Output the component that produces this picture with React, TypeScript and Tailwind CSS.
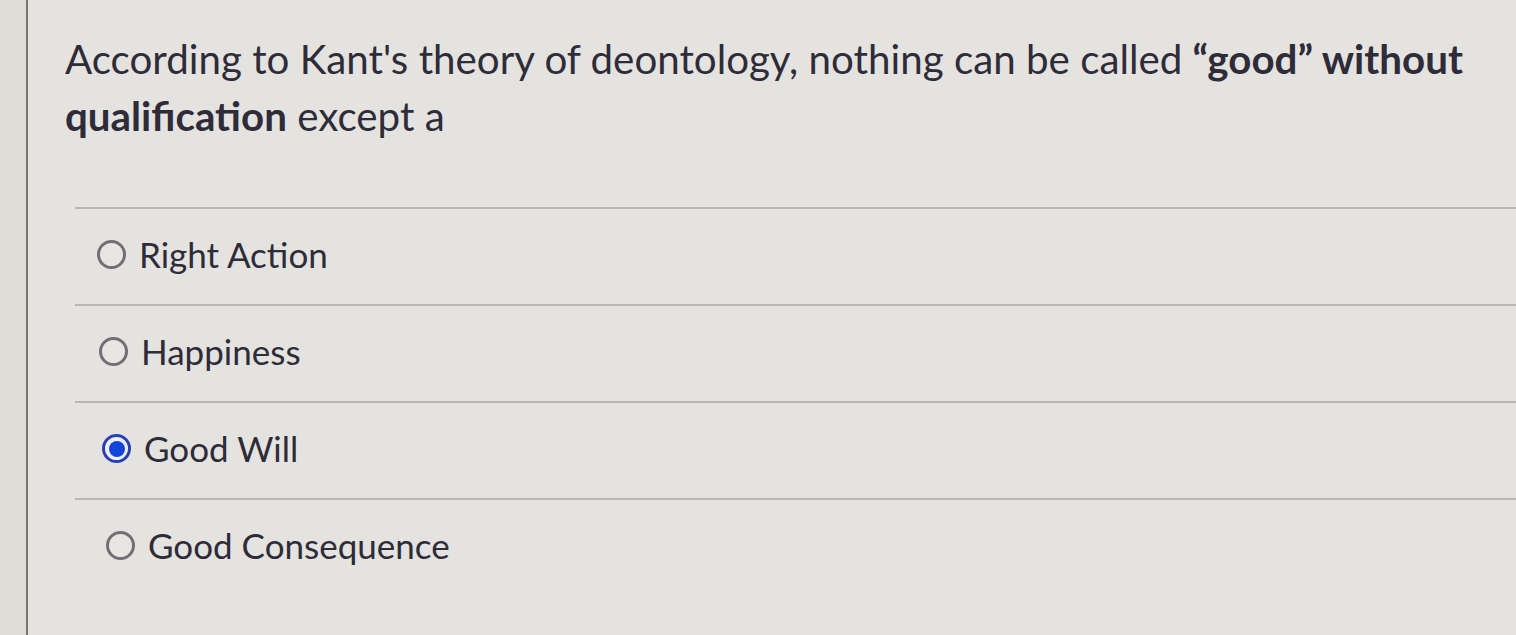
const options = [
  { label: 'Right Action', pad: 'pl-[22px]', checked: false },
  { label: 'Happiness', pad: 'pl-[24px]', checked: false },
  { label: 'Good Will', pad: 'pl-[27px]', checked: true },
  { label: 'Good Consequence', pad: 'pl-[31px]', checked: false },
]

function Radio({ checked }: { checked: boolean }) {
  if (checked) {
    return (
      <span className="flex h-[29px] w-[29px] shrink-0 items-center justify-center rounded-full border-[3px] border-[#2a3fb0] bg-[#eef0f8]">
        <span className="h-[16px] w-[16px] rounded-full bg-[#1346d8]" />
      </span>
    )
  }
  return <span className="h-[29px] w-[29px] shrink-0 rounded-full border-[3px] border-[#716f74] bg-[#e7e6e2]" />
}

export default function App() {
  return (
    <div className="flex h-[635px] w-[1516px] overflow-hidden bg-[#e4e3df] font-['Lato','Open_Sans',sans-serif] text-[#2e2c38]">
      <div className="w-[28px] shrink-0 border-r-[2px] border-[#77757a] bg-[#dedcd7]" />
      <main className="flex-1 pl-[37px]">
        <h1 className="pt-[30px] text-[40.3px] leading-[57px] font-normal">
          <span className="block">
            According to Kant's theory of deontology, nothing can be called{' '}
            <span className="font-bold">“good” without</span>
          </span>
          <span className="block">
            <span className="font-bold">qualification</span> except a
          </span>
        </h1>
        <ul className="mt-[63px] ml-[10px]">
          {options.map((o) => (
            <li key={o.label} className="h-[97px] border-t-[2px] border-[#b9b7b4]">
              <label className={`flex h-full items-center gap-[13px] pb-[4px] ${o.pad}`}>
                <Radio checked={o.checked} />
                <span className="text-[35px] leading-none">{o.label}</span>
              </label>
            </li>
          ))}
        </ul>
      </main>
    </div>
  )
}
